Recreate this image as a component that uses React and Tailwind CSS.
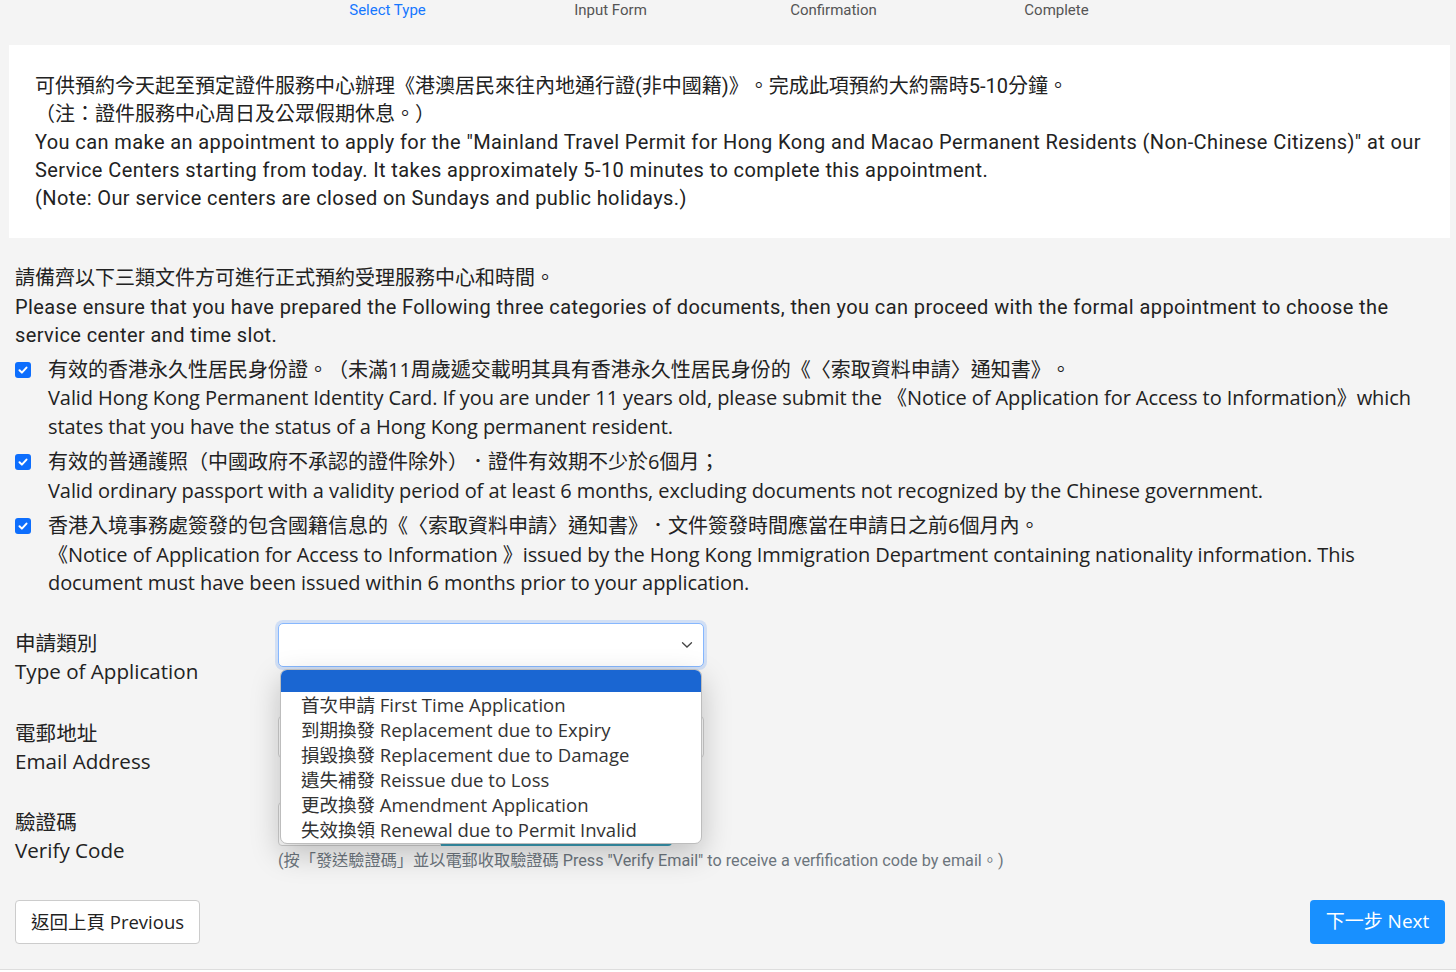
import React from "react";

const cjk = "font-['Roboto','Noto_Sans_CJK_TC',sans-serif]";
const wide = "font-['Open_Sans','Noto_Sans_CJK_TC',sans-serif]";

const steps = ["Select Type", "Input Form", "Confirmation", "Complete"];

const docs = [
  {
    zh: "有效的香港永久性居民身份證。（未滿11周歲遞交載明其具有香港永久性居民身份的《〈索取資料申請〉通知書》。",
    en: "Valid Hong Kong Permanent Identity Card. If you are under 11 years old, please submit the 《Notice of Application for Access to Information》which states that you have the status of a Hong Kong permanent resident.",
  },
  {
    zh: "有效的普通護照（中國政府不承認的證件除外）．證件有效期不少於6個月；",
    en: "Valid ordinary passport with a validity period of at least 6 months, excluding documents not recognized by the Chinese government.",
  },
  {
    zh: "香港入境事務處簽發的包含國籍信息的《〈索取資料申請〉通知書》．文件簽發時間應當在申請日之前6個月內。",
    en: "《Notice of Application for Access to Information 》issued by the Hong Kong Immigration Department containing nationality information. This document must have been issued within 6 months prior to your application.",
  },
];

const options = [
  "首次申請 First Time Application",
  "到期換發 Replacement due to Expiry",
  "損毀換發 Replacement due to Damage",
  "遺失補發 Reissue due to Loss",
  "更改換發 Amendment Application",
  "失效換領 Renewal due to Permit Invalid",
];

const Check = () => (
  <div className="mt-[6px] w-4 h-4 shrink-0 rounded-[3px] bg-[#0d6efd] flex items-center justify-center">
    <svg width="12" height="12" viewBox="0 0 12 12" fill="none">
      <path d="M2.5 6.2l2.4 2.4 4.6-5" stroke="#fff" strokeWidth="2" strokeLinecap="round" strokeLinejoin="round" />
    </svg>
  </div>
);

const App = () => {
  return (
    <div className={`min-h-[972px] bg-[#f4f4f4] text-[#222] [text-spacing-trim:space-all] ${cjk}`}>
      {/* STEPS */}
      <div className="grid grid-cols-4 w-[892px] ml-[276px] h-[45px] -mt-[2px]">
        {steps.map((s, i) => (
          <div
            key={s}
            className={`text-center text-[15px] leading-[24px] ${i === 0 ? "text-[#1677ff]" : "text-[#555]"}`}
          >
            {s}
          </div>
        ))}
      </div>

      {/* INTRO */}
      <div className="ml-[9px] mr-[6px] mt-[2px] bg-white px-[26px] pt-[27px] pb-[26px] text-[20px] leading-[28px]">
        <p>可供預約今天起至預定證件服務中心辦理《港澳居民來往內地通行證(非中國籍)》。完成此項預約大約需時5-10分鐘。</p>
        <p>（注：證件服務中心周日及公眾假期休息。）</p>
        <p className="tracking-[0.4px]">
          You can make an appointment to apply for the "Mainland Travel Permit for Hong Kong and Macao Permanent
          Residents (Non-Chinese Citizens)" at our Service Centers starting from today. It takes approximately 5-10
          minutes to complete this appointment.
        </p>
        <p className="tracking-[0.4px]">(Note: Our service centers are closed on Sundays and public holidays.)</p>
      </div>

      {/* DOCUMENTS */}
      <div className="px-[15px] mt-[26px] text-[20px] leading-[28.5px]">
        <p>請備齊以下三類文件方可進行正式預約受理服務中心和時間。</p>
        <p className="tracking-[0.4px]">
          Please ensure that you have prepared the Following three categories of documents, then you can proceed
          with the formal appointment to choose the service center and time slot.
        </p>
      </div>

      <div className={`px-[15px] mt-[6px] flex flex-col gap-[7px] text-[20px] leading-[28.5px] ${wide}`}>
        {docs.map((d, i) => (
          <div key={i} className="flex gap-[17px]">
            <Check />
            <div>
              <p>{d.zh}</p>
              <p className="tracking-[-0.08px]">{d.en}</p>
            </div>
          </div>
        ))}
      </div>

      {/* FORM */}
      <div className={`px-[15px] mt-[25px]`}>
        <div className="flex">
          <div className={`w-[263px] pt-[6px] text-[20.6px] leading-[28.5px] ${wide}`}>
            <p>申請類別</p>
            <p>Type of Application</p>
          </div>
          <div className="relative w-[426px]">
            <div className="h-[44px] rounded-[5px] bg-white border border-[#86b7fe] shadow-[0_0_0_3px_rgba(13,110,253,0.15)] flex items-center justify-end pr-[10px]">
              <svg width="12" height="8" viewBox="0 0 12 8" fill="none">
                <path d="M1.5 1.8l4.5 4.2 4.5-4.2" stroke="#444" strokeWidth="1.3" strokeLinecap="round" />
              </svg>
            </div>

            {/* OPEN SELECT LIST */}
            <div
              className={`absolute left-[2px] top-[46px] z-10 w-[422px] bg-white border border-[#bdbdbd] rounded-[7px] overflow-hidden shadow-[0_10px_30px_rgba(0,0,0,0.22)] ${wide} text-[18.5px] leading-[25px] text-[#333]`}
            >
              <div className="h-[22px] bg-[#1a66d2]" />
              <div className="pb-[1px]">
                {options.map((o) => (
                  <div key={o} className="pl-[20px] h-[25px] whitespace-nowrap">
                    {o}
                  </div>
                ))}
              </div>
            </div>
          </div>
        </div>

        <div className="flex mt-[30px]">
          <div className={`w-[263px] pt-[3px] text-[20.6px] leading-[28.5px] ${wide}`}>
            <p>電郵地址</p>
            <p>Email Address</p>
          </div>
          <div className="w-[426px] h-[42px] bg-white border border-[#cfcfcf] rounded-[4px]" />
        </div>

        <div className="flex mt-[26px]">
          <div className={`w-[263px] pt-[6px] text-[20.6px] leading-[28.5px] ${wide}`}>
            <p>驗證碼</p>
            <p>Verify Code</p>
          </div>
          <div>
            <div className="flex h-[44px]">
              <div className="w-[163px] bg-white border border-[#cfcfcf] rounded-l-[4px]" />
              <div className="w-[231px] bg-[#3a9bb5] rounded-r-[4px]" />
            </div>
            <p className="mt-[5px] text-[16.2px] leading-[20px] text-[#6c757d] whitespace-nowrap">
              (按「發送驗證碼」並以電郵收取驗證碼 Press "Verify Email" to receive a verfification code by email。)
            </p>
          </div>
        </div>
      </div>

      {/* BUTTONS */}
      <div className="flex justify-between pl-[15px] pr-[11px] mt-[29px]">
        <button className={`h-[44px] w-[185px] bg-white border border-[#cccccc] rounded-[4px] text-[18.5px] text-[#222] ${wide}`}>
          返回上頁 Previous
        </button>
        <button className={`h-[44px] w-[135px] bg-[#1890ff] rounded-[4px] text-[19px] text-white ${wide}`}>
          下一步 Next
        </button>
      </div>

      <div className="mt-[25px] border-t border-[#dddddd]" />
    </div>
  );
};

export default App;
